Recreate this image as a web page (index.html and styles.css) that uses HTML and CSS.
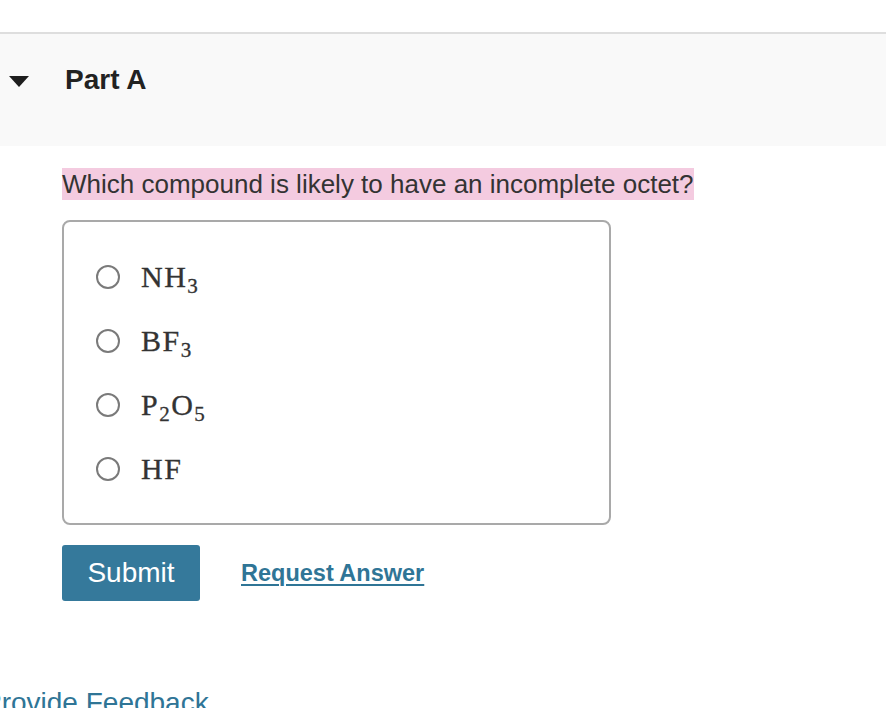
FILE: index.html
```html
<!DOCTYPE html>
<html>
<head>
<meta charset="utf-8">
<link rel="stylesheet" href="styles.css">
</head>
<body>
<div class="top-space"></div>
<div class="part-header">
  <span class="caret"></span>
  <span class="part-title">Part A</span>
</div>
<div class="content">
  <p class="question"><span class="hl">Which compound is likely to have an incomplete octet?</span></p>
  <div class="options">
    <label class="opt"><span class="radio"></span><span class="chem">NH<sub>3</sub></span></label>
    <label class="opt"><span class="radio"></span><span class="chem">BF<sub>3</sub></span></label>
    <label class="opt"><span class="radio"></span><span class="chem">P<sub>2</sub>O<sub>5</sub></span></label>
    <label class="opt"><span class="radio"></span><span class="chem">HF</span></label>
  </div>
  <div class="actions">
    <button class="submit">Submit</button>
    <a class="request" href="#">Request Answer</a>
  </div>
</div>
<div class="feedback">Provide Feedback</div>
</body>
</html>
```
FILE: styles.css
```css
html, body {
  margin: 0;
  padding: 0;
  background: #ffffff;
  font-family: "Liberation Sans", Arial, sans-serif;
  color: #222;
  overflow: hidden;
}
.top-space {
  height: 32px;
}
.part-header {
  border-top: 2px solid #dedede;
  background: #f9f9f9;
  height: 112px;
  display: flex;
  align-items: center;
  padding-bottom: 20px;
  box-sizing: border-box;
  height: 114px;
}
.caret {
  width: 0;
  height: 0;
  margin-left: 9px;
  border-left: 10.5px solid transparent;
  border-right: 10.5px solid transparent;
  border-top: 11px solid #1e1e1e;
  margin-top: 2px;
}
.part-title {
  margin-left: 36px;
  font-size: 28px;
  font-weight: bold;
  color: #222;
}
.content {
  padding-left: 62px;
}
.question {
  margin: 0;
  padding-top: 22px;
  font-size: 26px;
  line-height: 32px;
  color: #333;
}
.hl {
  background: #f4cbe0;
  padding: 1px 0;
}
.options {
  margin-top: 20px;
  border: 2px solid #a9a9a9;
  border-radius: 8px;
  padding: 23px 0 0 32px;
  box-sizing: content-box;
  width: 513px;
  height: 278px;
  display: flex;
  flex-direction: column;
}
.opt {
  display: flex;
  align-items: center;
  height: 64px;
}
.radio {
  width: 20px;
  height: 20px;
  border: 2px solid #7a7a7a;
  border-radius: 50%;
  flex: none;
}
.chem {
  margin-left: 21px;
  font-family: "Liberation Serif", "Times New Roman", serif;
  font-size: 30px;
  color: #333;
  letter-spacing: 1.5px;
  -webkit-text-stroke: 0.3px #333;
}
.chem sub {
  font-size: 21px;
  vertical-align: -6px;
  line-height: 0;
}
.actions {
  margin-top: 20px;
  display: flex;
  align-items: center;
}
.submit {
  width: 138px;
  height: 56px;
  background: #35799b;
  color: #fff;
  border: none;
  border-radius: 3px;
  font-family: "Liberation Sans", Arial, sans-serif;
  font-size: 28px;
  padding: 0;
}
.request {
  margin-left: 41px;
  font-size: 23.5px;
  font-weight: bold;
  color: #2f7596;
  text-decoration: underline;
  text-underline-offset: 3px;
  text-decoration-thickness: 2px;
}
.feedback {
  margin-top: 86px;
  margin-left: -17px;
  font-size: 28px;
  color: #2f7596;
  line-height: 32px;
}
```
